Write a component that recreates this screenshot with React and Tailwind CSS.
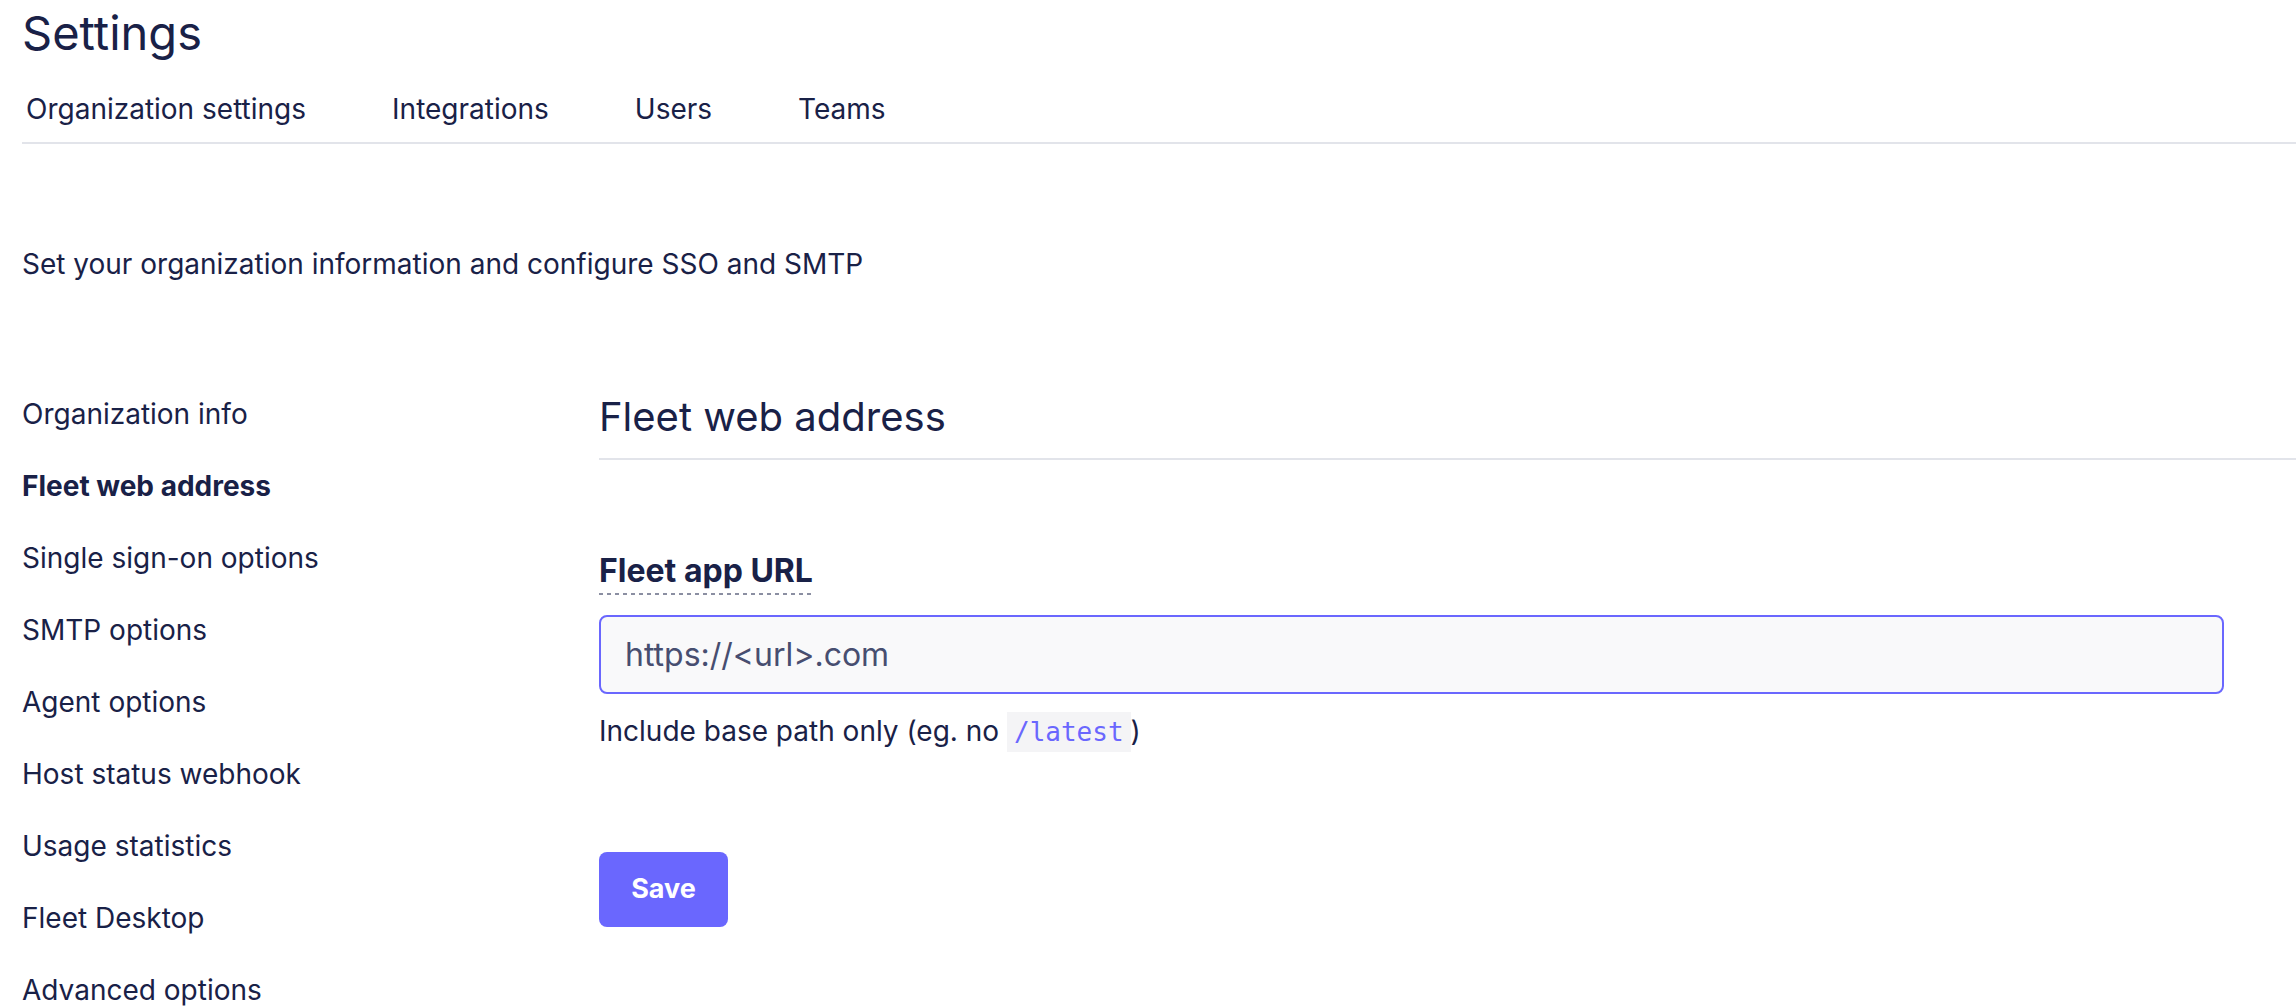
import React, { useState } from 'react';

const tabs = ['Organization settings', 'Integrations', 'Users', 'Teams'];

const sections = [
  'Organization info',
  'Fleet web address',
  'Single sign-on options',
  'SMTP options',
  'Agent options',
  'Host status webhook',
  'Usage statistics',
  'Fleet Desktop',
  'Advanced options',
];

export default function App() {
  const [url, setUrl] = useState('https://<url>.com');
  const active = 'Fleet web address';

  return (
    <div className="min-h-screen bg-white pl-[22px] text-[#192147] font-['Inter','Noto_Sans',sans-serif]">
      {/* page title */}
      <h1 className="pt-[5px] text-[47px] leading-[56px] font-normal">Settings</h1>

      {/* tabs */}
      <nav className="mt-[28px] flex gap-[86px] border-b-2 border-[#e2e4ea] pb-[13px] pl-[4px] text-[28px] leading-[40px]">
        {tabs.map((t) => (
          <span key={t}>{t}</span>
        ))}
      </nav>

      <p className="mt-[100px] text-[28px] leading-[40px]">
        Set your organization information and configure SSO and SMTP
      </p>

      <div className="mt-[94px] flex">
        {/* section nav */}
        <aside className="w-[577px] shrink-0 text-[28px]">
          {sections.map((s) => (
            <div
              key={s}
              className={`h-[72px] leading-[72px] ${s === active ? 'font-bold' : 'font-normal'}`}
            >
              {s}
            </div>
          ))}
        </aside>

        {/* form */}
        <section className="flex-1 pt-[15px]">
          <h2 className="border-b-2 border-[#e2e4ea] pb-[17px] text-[40px] leading-[48px] font-normal">
            Fleet web address
          </h2>

          <div className="mt-[92px] pr-[72px]">
            <label className="inline-block text-[32px] font-bold leading-[38px]">
              Fleet app URL
              <div className="mt-[3px] h-[2px] bg-[repeating-linear-gradient(to_right,#8b8fa2_0_4px,transparent_4px_8px)]" />
            </label>

            <input
              autoFocus
              value={url}
              onChange={(e) => setUrl(e.target.value)}
              onFocus={(e) => {
                const n = e.target.value.length;
                e.target.setSelectionRange(n, n);
              }}
              className="mt-[20px] block h-[79px] w-full rounded-[8px] border-2 border-[#6a67fe] bg-[#f9f9fa] px-[24px] text-[32px] text-[#474e70] caret-[#192147] outline-none"
            />

            <p className="mt-[17px] text-[28px] leading-[40px]">
              Include base path only (eg. no{' '}
              <code className="bg-[#f4f4f6] px-[7px] py-[5px] font-['DejaVu_Sans_Mono',monospace] text-[26px] text-[#6a67fe]">
                /latest
              </code>
              )
            </p>

            <button
              type="button"
              className="mt-[100px] h-[75px] w-[129px] rounded-[8px] bg-[#6a67fe] text-[27px] font-bold text-white"
            >
              Save
            </button>
          </div>
        </section>
      </div>
    </div>
  );
}
